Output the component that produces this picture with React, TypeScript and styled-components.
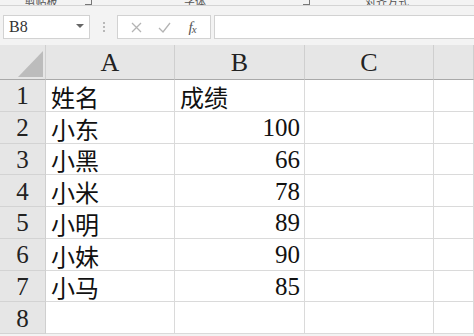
import styled, { createGlobalStyle } from "styled-components";

const GlobalStyle = createGlobalStyle`
  html, body {
    margin: 0;
    padding: 0;
    background: #ffffff;
    overflow: hidden;
  }
  body {
    font-family: "Liberation Serif", "Noto Sans CJK SC", serif;
  }
`;

const Page = styled.div`
  width: 474px;
  height: 336px;
  overflow: hidden;
  background: #f3f3f3;
`;

const Ribbon = styled.div`
  height: 5px;
  overflow: hidden;
  display: grid;
  grid-template-columns: 100px 218px 1fr;
  border-bottom: 1px solid #d4d4d4;
`;

const RibbonGroup = styled.div`
  position: relative;
  display: flex;
  justify-content: center;
  align-items: flex-end;
  height: 5px;
`;

const RibbonLabel = styled.span<{ $shift?: number }>`
  font-family: "Noto Sans CJK SC", sans-serif;
  font-size: 11px;
  line-height: 11px;
  color: #555;
  margin-bottom: -2px;
  transform: translateX(${(p) => p.$shift ?? 0}px);
`;

const Launcher = styled.span<{ $right: number }>`
  position: absolute;
  right: ${(p) => p.$right}px;
  bottom: 0;
  width: 6px;
  height: 4px;
  border-right: 1px solid #777;
  border-bottom: 1px solid #777;
`;

const FormulaBar = styled.div`
  height: 39px;
  display: flex;
  align-items: flex-start;
  padding-top: 9px;
  box-sizing: border-box;
`;

const NameBox = styled.div`
  margin-left: 3px;
  width: 87px;
  height: 24px;
  box-sizing: border-box;
  background: #fff;
  border: 1px solid #d2d2d2;
  display: flex;
  align-items: center;
  justify-content: space-between;
  padding: 0 5px 0 5px;
  font-size: 16px;
  color: #333;
`;

const Caret = styled.span`
  width: 0;
  height: 0;
  border-left: 4px solid transparent;
  border-right: 4px solid transparent;
  border-top: 4px solid #666;
  margin-top: -2px;
`;

const Grip = styled.div`
  width: 27px;
  height: 24px;
  display: flex;
  flex-direction: column;
  align-items: center;
  justify-content: center;
  gap: 2px;

  span {
    width: 2px;
    height: 2px;
    background: #b8b8b8;
  }
`;

const FxBox = styled.div`
  width: 94px;
  height: 24px;
  box-sizing: border-box;
  background: #fff;
  border: 1px solid #d2d2d2;
  display: grid;
  grid-template-columns: 1fr 1fr 1fr;
  align-items: center;
  justify-items: center;
  padding: 0 4px;
`;

const FxText = styled.span`
  font-family: "Liberation Serif", serif;
  font-style: italic;
  font-size: 15px;
  color: #555;
  letter-spacing: -1px;

  sub {
    font-size: 11px;
    vertical-align: -1px;
  }
`;

const FormulaInput = styled.div`
  flex: 1;
  margin-left: 3px;
  height: 24px;
  box-sizing: border-box;
  background: #fff;
  border: 1px solid #d2d2d2;
  border-right: none;
`;

const Sheet = styled.div`
  display: grid;
  grid-template-columns: 46px 129px 130px 129px 1fr;
  grid-template-rows: 35px repeat(8, 31.75px);
  background: #fff;
`;

const Corner = styled.div`
  background: #e6e6e6;
  border-right: 1px solid #d0d0d0;
  border-bottom: 1px solid #a9a9a9;
  display: flex;
  align-items: flex-end;
  justify-content: flex-end;
  padding: 0 2px 2px 0;
`;

const ColHead = styled.div`
  background: #e6e6e6;
  border-right: 1px solid #cfcfcf;
  border-bottom: 1px solid #a9a9a9;
  display: flex;
  align-items: center;
  justify-content: center;
  font-size: 26px;
  color: #222;
  padding-top: 2px;
`;

const RowHead = styled.div`
  background: #e6e6e6;
  border-right: 1px solid #cfcfcf;
  border-bottom: 1px solid #d3d3d3;
  display: flex;
  align-items: center;
  justify-content: center;
  font-size: 25px;
  color: #222;
  padding-top: 2px;
`;

const Cell = styled.div<{ $num?: boolean }>`
  border-right: 1px solid #dadada;
  border-bottom: 1px solid #dadada;
  display: flex;
  align-items: center;
  justify-content: ${(p) => (p.$num ? "flex-end" : "flex-start")};
  padding: 2px ${(p) => (p.$num ? 4 : 0)}px 0 ${(p) => (p.$num ? 0 : 5)}px;
  font-size: ${(p) => (p.$num ? 25 : 24)}px;
  color: #111;
  white-space: nowrap;
  overflow: hidden;
`;

const cols = ["A", "B", "C", ""];

const rows: [string, string][] = [
  ["姓名", "成绩"],
  ["小东", "100"],
  ["小黑", "66"],
  ["小米", "78"],
  ["小明", "89"],
  ["小妹", "90"],
  ["小马", "85"],
  ["", ""],
];

const App = () => {
  return (
    <Page>
      <GlobalStyle />
      <Ribbon>
        <RibbonGroup>
          <RibbonLabel $shift={-9}>剪贴板</RibbonLabel>
          <Launcher $right={8} />
        </RibbonGroup>
        <RibbonGroup>
          <RibbonLabel $shift={-14}>字体</RibbonLabel>
          <Launcher $right={8} />
        </RibbonGroup>
        <RibbonGroup>
          <RibbonLabel $shift={-9}>对齐方式</RibbonLabel>
        </RibbonGroup>
      </Ribbon>

      <FormulaBar>
        <NameBox>
          <span>B8</span>
          <Caret />
        </NameBox>
        <Grip>
          <span />
          <span />
          <span />
        </Grip>
        <FxBox>
          <svg width="11" height="11" viewBox="0 0 11 11">
            <path d="M1 1 L10 10 M10 1 L1 10" stroke="#b4b4b4" strokeWidth="1.3" />
          </svg>
          <svg width="13" height="11" viewBox="0 0 13 11">
            <path d="M1 6 L5 10 L12 1" stroke="#b4b4b4" strokeWidth="1.3" fill="none" />
          </svg>
          <FxText>
            f<sub>x</sub>
          </FxText>
        </FxBox>
        <FormulaInput />
      </FormulaBar>

      <Sheet>
        <Corner>
          <svg width="25" height="26" viewBox="0 0 25 26">
            <polygon points="25,0 25,26 0,26" fill="#bcbcbc" />
          </svg>
        </Corner>
        {cols.map((c, i) => (
          <ColHead key={i}>{c}</ColHead>
        ))}
        {rows.map(([name, score], r) => (
          <>
            <RowHead key={`h${r}`}>{r + 1}</RowHead>
            <Cell key={`a${r}`}>{name}</Cell>
            <Cell key={`b${r}`} $num={r > 0}>
              {score}
            </Cell>
            <Cell key={`c${r}`} />
            <Cell key={`d${r}`} />
          </>
        ))}
      </Sheet>
    </Page>
  );
};

export default App;
